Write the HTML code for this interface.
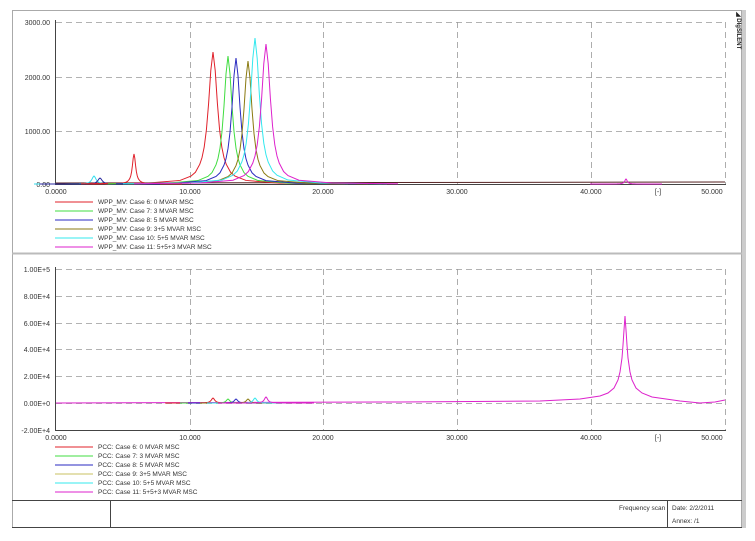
<!DOCTYPE html>
<html><head><meta charset="utf-8"><style>
html,body{margin:0;padding:0;background:#fff;}
svg{display:block;font-family:"Liberation Sans",sans-serif;}
</style></head><body>
<svg width="755" height="541" viewBox="0 0 755 541" xmlns="http://www.w3.org/2000/svg">
<defs>
<path id="lz" vector-effect="non-scaling-stroke" fill="none" d="M-60,-0.0017 L-30,-0.0069 L-15,-0.027 L-10,-0.06 L-8,-0.089 L-6,-0.15 L-5,-0.2 L-4,-0.28 L-3,-0.41 L-2,-0.61 L-1,-0.86 L0,-1 L1,-0.86 L2,-0.61 L3,-0.41 L4,-0.28 L5,-0.2 L6,-0.15 L8,-0.089 L10,-0.06 L15,-0.027 L30,-0.0069 L60,-0.0017"/>
</defs>
<rect x="12.5" y="10.5" width="729" height="517" fill="none" stroke="#aaa" stroke-width="1"/>
<rect x="742" y="10" width="4" height="518" fill="#ccc"/>
<line x1="12" y1="253.5" x2="742" y2="253.5" stroke="#bbb" stroke-width="2"/>
<text x="737" y="12" font-size="6" font-weight="bold" transform="rotate(90 737 12)" fill="#222">◢ DIgSILENT</text>

<g stroke="#999" stroke-width="0.8" stroke-dasharray="6,4" fill="none">
<line x1="56" y1="22.5" x2="725" y2="22.5"/><line x1="56" y1="77.5" x2="725" y2="77.5"/><line x1="56" y1="131.5" x2="725" y2="131.5"/>
<line x1="190.5" y1="22" x2="190.5" y2="184"/><line x1="323.5" y1="22" x2="323.5" y2="184"/><line x1="457.5" y1="22" x2="457.5" y2="184"/><line x1="591.5" y1="22" x2="591.5" y2="184"/><line x1="725.5" y1="22" x2="725.5" y2="184"/>
</g>
<g stroke="#444" stroke-width="1">
<line x1="55.5" y1="20" x2="55.5" y2="185"/><line x1="55" y1="184.5" x2="726" y2="184.5"/>
</g>
<g font-size="7" fill="#333" text-anchor="end">
<text x="50" y="25">3000.00</text><text x="50" y="80">2000.00</text><text x="50" y="134">1000.00</text><text x="50" y="187">0.00</text>
</g>
<g font-size="7" fill="#333" text-anchor="middle">
<text x="56" y="194">0.0000</text><text x="190" y="194">10.000</text><text x="323" y="194">20.000</text><text x="457" y="194">30.000</text><text x="591" y="194">40.000</text><text x="658" y="194">[-]</text><text x="712" y="194">50.000</text>
</g>
<line x1="56" y1="183" x2="725" y2="182" stroke="#552222" stroke-width="1"/>
<g stroke-width="1">
<use href="#lz" transform="translate(134,184) scale(0.8,30)" stroke="#e0202a"/>
<use href="#lz" transform="translate(94,184) scale(1,8)" stroke="#33ddee"/>
<use href="#lz" transform="translate(100,184) scale(1,6)" stroke="#2a2aa0"/>
<use href="#lz" transform="translate(213,184) scale(2.2,132)" stroke="#e0202a"/>
<use href="#lz" transform="translate(228,184) scale(2,128)" stroke="#40dd40"/>
<use href="#lz" transform="translate(236,184) scale(2,126)" stroke="#2a2ac0"/>
<use href="#lz" transform="translate(248,184) scale(2,123)" stroke="#8a7a10"/>
<use href="#lz" transform="translate(255,184) scale(2.2,146)" stroke="#33e8ee"/>
<use href="#lz" transform="translate(266,184) scale(2.2,140)" stroke="#dd22cc"/>
<use href="#lz" transform="translate(626,184) scale(0.6,5)" stroke="#dd22cc"/>
</g>
<g font-size="6.5" fill="#333">
<line x1="55" y1="202" x2="93" y2="202" stroke="#e0202a"/><text x="98" y="204">WPP_MV: Case 6: 0 MVAR MSC</text>
<line x1="55" y1="211" x2="93" y2="211" stroke="#40dd40"/><text x="98" y="213">WPP_MV: Case 7: 3 MVAR MSC</text>
<line x1="55" y1="220" x2="93" y2="220" stroke="#2a2ac0"/><text x="98" y="222">WPP_MV: Case 8: 5 MVAR MSC</text>
<line x1="55" y1="229" x2="93" y2="229" stroke="#8a7a10"/><text x="98" y="231">WPP_MV: Case 9: 3+5 MVAR MSC</text>
<line x1="55" y1="238" x2="93" y2="238" stroke="#33e8ee"/><text x="98" y="240">WPP_MV: Case 10: 5+5 MVAR MSC</text>
<line x1="55" y1="247" x2="93" y2="247" stroke="#dd22cc"/><text x="98" y="249">WPP_MV: Case 11: 5+5+3 MVAR MSC</text>
</g>

<g stroke="#999" stroke-width="0.8" stroke-dasharray="6,4" fill="none">
<line x1="56" y1="269.5" x2="725" y2="269.5"/><line x1="56" y1="296.5" x2="725" y2="296.5"/><line x1="56" y1="323.5" x2="725" y2="323.5"/><line x1="56" y1="349.5" x2="725" y2="349.5"/><line x1="56" y1="376.5" x2="725" y2="376.5"/><line x1="56" y1="403.5" x2="725" y2="403.5"/>
<line x1="190.5" y1="269" x2="190.5" y2="430"/><line x1="323.5" y1="269" x2="323.5" y2="430"/><line x1="457.5" y1="269" x2="457.5" y2="430"/><line x1="591.5" y1="269" x2="591.5" y2="430"/><line x1="725.5" y1="269" x2="725.5" y2="430"/>
</g>
<g stroke="#444" stroke-width="1">
<line x1="55.5" y1="267" x2="55.5" y2="431"/><line x1="55" y1="430.5" x2="726" y2="430.5"/>
</g>
<g font-size="7" fill="#333" text-anchor="end">
<text x="50" y="272">1.00E+5</text><text x="50" y="299">8.00E+4</text><text x="50" y="326">6.00E+4</text><text x="50" y="352">4.00E+4</text><text x="50" y="379">2.00E+4</text><text x="50" y="406">0.00E+0</text><text x="50" y="433">-2.00E+4</text>
</g>
<g font-size="7" fill="#333" text-anchor="middle">
<text x="56" y="440">0.0000</text><text x="190" y="440">10.000</text><text x="323" y="440">20.000</text><text x="457" y="440">30.000</text><text x="591" y="440">40.000</text><text x="658" y="440">[-]</text><text x="712" y="440">50.000</text>
</g>
<g stroke-width="1" fill="none">
<path d="M56,403 L400,402 L540,401 L580,399 L600,396 L608,393 L614,388 L618,380 L620,372 L622,358 L623,345 L624,330 L625,316 L626,330 L627,345 L628,358 L630,372 L632,380 L636,388 L642,393 L652,397 L680,401 L700,403 L715,402 L725,400" stroke="#dd22cc"/>
<use href="#lz" transform="translate(213,403) scale(0.8,5)" stroke="#e0202a"/>
<use href="#lz" transform="translate(228,403) scale(0.8,4)" stroke="#40dd40"/>
<use href="#lz" transform="translate(236,403) scale(0.8,4)" stroke="#2a2ac0"/>
<use href="#lz" transform="translate(248,403) scale(0.8,4)" stroke="#8a7a10"/>
<use href="#lz" transform="translate(255,403) scale(0.8,5)" stroke="#33e8ee"/>
<use href="#lz" transform="translate(266,403) scale(0.8,6)" stroke="#dd22cc"/>
</g>
<g font-size="6.5" fill="#333">
<line x1="55" y1="447" x2="93" y2="447" stroke="#e0202a"/><text x="98" y="449">PCC: Case 6: 0 MVAR MSC</text>
<line x1="55" y1="456" x2="93" y2="456" stroke="#40dd40"/><text x="98" y="458">PCC: Case 7: 3 MVAR MSC</text>
<line x1="55" y1="465" x2="93" y2="465" stroke="#2a2ac0"/><text x="98" y="467">PCC: Case 8: 5 MVAR MSC</text>
<line x1="55" y1="474" x2="93" y2="474" stroke="#c8c060"/><text x="98" y="476">PCC: Case 9: 3+5 MVAR MSC</text>
<line x1="55" y1="483" x2="93" y2="483" stroke="#33e8ee"/><text x="98" y="485">PCC: Case 10: 5+5 MVAR MSC</text>
<line x1="55" y1="492" x2="93" y2="492" stroke="#dd22cc"/><text x="98" y="494">PCC: Case 11: 5+5+3 MVAR MSC</text>
</g>

<g stroke="#444" stroke-width="1">
<line x1="12" y1="500.5" x2="742" y2="500.5"/>
<line x1="110.5" y1="500" x2="110.5" y2="528"/>
<line x1="667.5" y1="500" x2="667.5" y2="528"/>
<line x1="12" y1="527.5" x2="742" y2="527.5"/>
</g>
<g font-size="6.5" fill="#333">
<text x="619" y="510">Frequency scan</text>
<text x="672" y="510">Date:  2/2/2011</text>
<text x="672" y="523">Annex:  /1</text>
</g>
</svg>
</body></html>
